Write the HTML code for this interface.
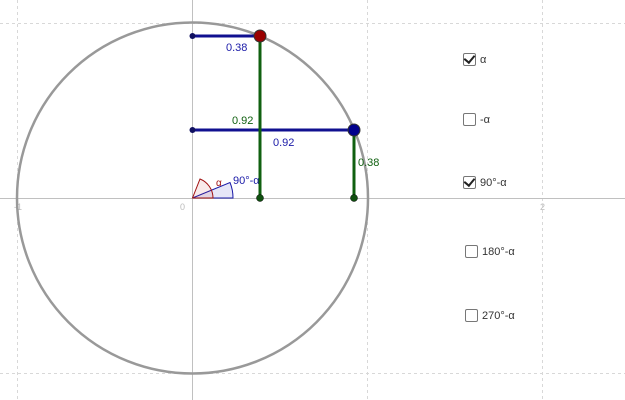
<!DOCTYPE html>
<html><head><style>
body{margin:0;background:#fff;width:625px;height:400px;overflow:hidden;font-family:"Liberation Sans",sans-serif}
.cb{position:absolute;font-size:11px;color:#333;display:flex;align-items:center}
.b{width:11px;height:11px;border:1.5px solid #777;border-radius:2px;margin-right:4px;position:relative;background:#fff}
.b.c::after{content:"";position:absolute;left:2px;top:-1px;width:5px;height:8px;border:solid #222;border-width:0 2px 2px 0;transform:rotate(40deg)}
</style></head><body>
<svg width="625" height="400" style="position:absolute;left:0;top:0" font-family="Liberation Sans, sans-serif">
<g stroke="#d8d8d8" stroke-width="1" stroke-dasharray="3,3">
<line x1="17.5" y1="0" x2="17.5" y2="400"/><line x1="367.5" y1="0" x2="367.5" y2="400"/><line x1="542.5" y1="0" x2="542.5" y2="400"/>
<line x1="0" y1="23.5" x2="625" y2="23.5"/><line x1="0" y1="373.5" x2="625" y2="373.5"/>
</g>
<line x1="0" y1="198.5" x2="625" y2="198.5" stroke="#c0c0c0"/>
<line x1="192.5" y1="0" x2="192.5" y2="400" stroke="#c0c0c0"/>
<text x="14" y="210" font-size="9" fill="#bbb">-1</text>
<text x="180" y="210" font-size="9" fill="#bbb">0</text>
<text x="540" y="210" font-size="9" fill="#bbb">2</text>
<circle cx="192.5" cy="198" r="175.5" fill="none" stroke="#999" stroke-width="2.5"/>
<path d="M192.5,198 L233,198 A40.5,40.5 0 0 0 230,182.5 Z" fill="#3030c0" fill-opacity=".12" stroke="#1a1aa8" stroke-width="1"/>
<path d="M192.5,198 L213,198 A20.5,20.5 0 0 0 200,179 Z" fill="#c03030" fill-opacity=".1" stroke="#a01010" stroke-width="1"/>
<text x="216" y="186" font-size="10" fill="#a01010">α</text>
<text x="233" y="184" font-size="11" fill="#1a1aa8">90°-α</text>
<line x1="192.5" y1="36" x2="260" y2="36" stroke="#101090" stroke-width="3"/>
<line x1="192.5" y1="130" x2="354" y2="130" stroke="#101090" stroke-width="3"/>
<line x1="260" y1="36" x2="260" y2="198" stroke="#106010" stroke-width="3"/>
<line x1="354" y1="130" x2="354" y2="198" stroke="#106010" stroke-width="3"/>
<circle cx="192.5" cy="36" r="3" fill="#101060"/>
<circle cx="192.5" cy="130" r="3" fill="#101060"/>
<circle cx="260" cy="198" r="3.5" fill="#105010" stroke="#000" stroke-width=".5"/>
<circle cx="354" cy="198" r="3.5" fill="#105010" stroke="#000" stroke-width=".5"/>
<circle cx="260" cy="36" r="6" fill="#990000" stroke="#333" stroke-width="1"/>
<circle cx="354" cy="130" r="6" fill="#00008c" stroke="#333" stroke-width="1"/>
<text x="226" y="51" font-size="11" fill="#1a1aa8">0.38</text>
<text x="232" y="124" font-size="11" fill="#106010">0.92</text>
<text x="273" y="146" font-size="11" fill="#1a1aa8">0.92</text>
<text x="358" y="166" font-size="11" fill="#106010">0.38</text>
</svg>
<div class="cb" style="left:463px;top:53px"><div class="b c"></div>α</div>
<div class="cb" style="left:463px;top:113px"><div class="b"></div>-α</div>
<div class="cb" style="left:463px;top:176px"><div class="b c"></div>90°-α</div>
<div class="cb" style="left:465px;top:245px"><div class="b"></div>180°-α</div>
<div class="cb" style="left:465px;top:309px"><div class="b"></div>270°-α</div>
</body></html>
